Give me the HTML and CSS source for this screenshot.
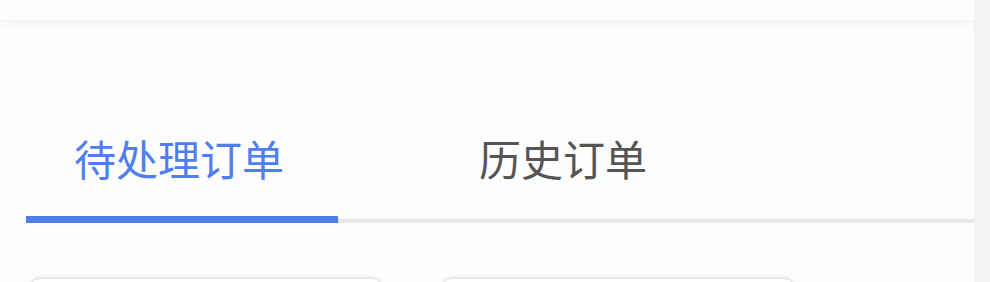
FILE: index.html
```html
<!DOCTYPE html>
<html lang="zh-CN">
<head>
<meta charset="utf-8">
<title>订单</title>
<link rel="stylesheet" href="styles.css">
</head>
<body>
<div class="page">
  <main class="main">
    <header class="navbar"></header>
    <nav class="tabs">
      <div class="tab tab-active">待处理订单</div>
      <div class="tab">历史订单</div>
    </nav>
    <section class="cards">
      <div class="card"></div>
      <div class="card"></div>
    </section>
  </main>
  <div class="scrollbar"></div>
</div>
</body>
</html>
```

FILE: styles.css
```css
html, body {
  margin: 0;
  padding: 0;
  height: 100%;
  overflow: hidden;
  background: #fdfdfd;
}

.page {
  display: flex;
  height: 100%;
  font-family: "Noto Sans CJK SC", "Noto Sans", sans-serif;
}

.main {
  flex: 1;
  display: flex;
  flex-direction: column;
  min-width: 0;
  overflow: hidden;
}

.main > * {
  flex: none;
}

.scrollbar {
  width: 16px;
  flex: none;
  background: #f3f3f3;
}

.navbar {
  height: 20px;
  background: #fdfdfd;
  border-bottom: 1px solid #f3f4f4;
  box-shadow: 0 2px 12px rgba(60, 80, 80, 0.06);
  position: relative;
  z-index: 1;
}

.tabs {
  display: flex;
  gap: 93px;
  margin: 116px 0 0 26px;
  box-shadow: inset 0 -4px 0 #e8e8e8;
}

.tab {
  font-size: 42px;
  line-height: 42px;
  padding: 0 54px 37px 48px;
  color: #555555;
  border-bottom: 7px solid transparent;
  white-space: nowrap;
}

.tab-active {
  color: #4f7ef0;
  border-bottom-color: #4f7ef0;
}

.cards {
  display: flex;
  gap: 60px;
  margin: 56px 0 0 30px;
}

.card {
  width: 352px;
  height: 40px;
  flex: none;
  background: #ffffff;
  border-radius: 10px;
  box-shadow: 0 -1px 4px rgba(0, 0, 0, 0.16);
}
```
